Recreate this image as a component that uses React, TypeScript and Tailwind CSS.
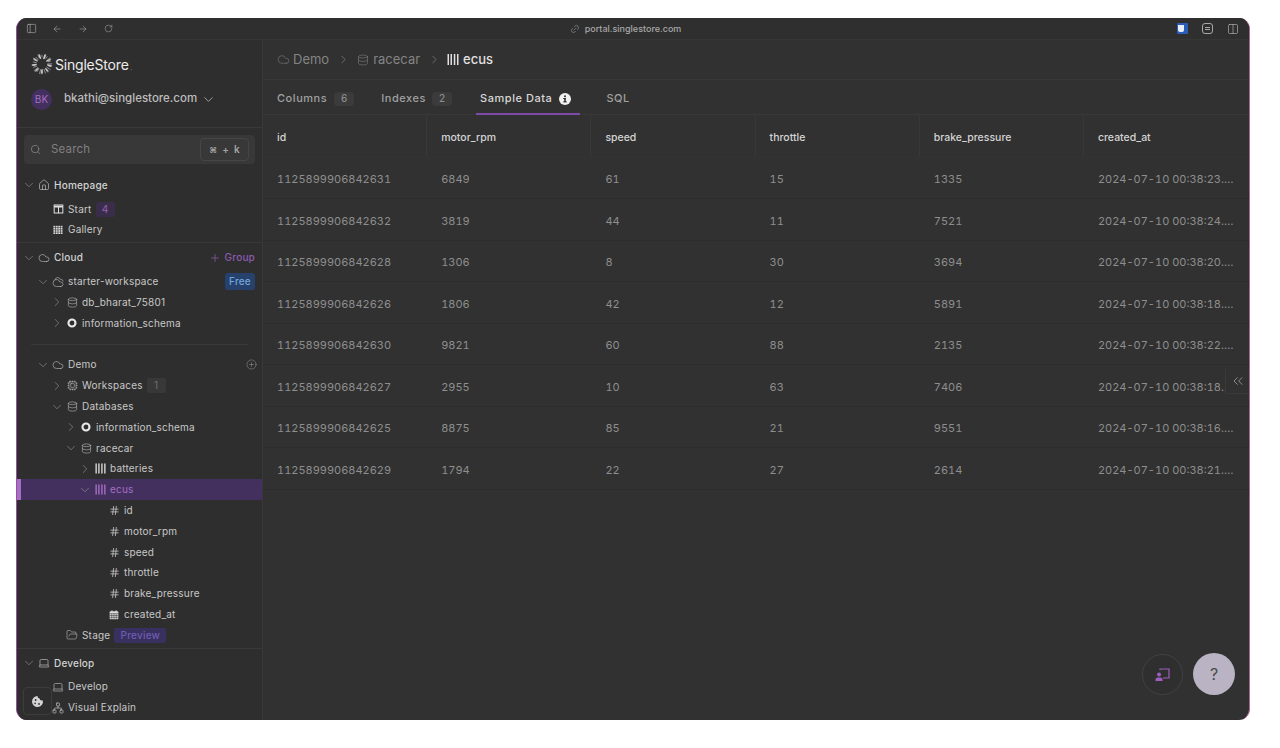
import React from "react";
import { ChevronDown, ChevronRight, ChevronsLeft, ArrowLeft, ArrowRight, RotateCw, Search, Link2, Home, Cloud, Cloudy, Database, Plus, CirclePlus, Cpu, Hash, FolderOpen, Laptop, Network, PanelLeft, Columns2 } from "lucide-react";

const Bars = ({ cls = "" }: { cls?: string }) => (
  <svg viewBox="0 0 12 12" className={cls} fill="currentColor">
    <rect x="0.5" y="0.5" width="1.5" height="11" /><rect x="3.5" y="0.5" width="1.5" height="11" /><rect x="6.8" y="0.5" width="1.5" height="11" /><rect x="10" y="0.5" width="1.5" height="11" />
  </svg>
);
const Schema = () => (
  <svg viewBox="0 0 12 12" className="w-[10px] h-[10px]"><circle cx="6" cy="6" r="4.2" fill="none" stroke="#e8e8e8" strokeWidth="2.6" /></svg>
);
const Grid = () => (
  <svg viewBox="0 0 12 12" className="w-[10px] h-[10px]" fill="#d8d8d8">
    {[0, 1, 2, 3].flatMap((r) => [0, 1, 2, 3].map((c) => <rect key={r + "-" + c} x={0.5 + c * 2.9} y={1 + r * 2.6} width="2.2" height="2" />))}
  </svg>
);
const TableIco = () => (
  <svg viewBox="0 0 12 12" className="w-[11px] h-[10px]" fill="none" stroke="#e0e0e0" strokeWidth="1.2"><rect x="0.8" y="1.2" width="10.4" height="9.6" /><path d="M0.8 3.2h10.4" strokeWidth="2" /><path d="M6 3v8" /></svg>
);
const Cal = () => (
  <svg viewBox="0 0 12 12" className="w-[10px] h-[10px]" fill="#dcdcdc">
    <rect x="0.8" y="1.6" width="10.4" height="9.6" rx="1" /><rect x="3" y="0.4" width="1.2" height="2" /><rect x="7.8" y="0.4" width="1.2" height="2" />
    <path d="M0.8 4.4h10.4M0.8 6.6h10.4M0.8 8.8h10.4M3.3 4.4v7M6 4.4v7M8.7 4.4v7" stroke="#2e2e2e" strokeWidth="0.6" />
  </svg>
);
const CookieIco = () => (
  <svg viewBox="0 0 14 14" className="w-[13px] h-[13px]">
    <path d="M7 1.2a2.4 2.4 0 0 0 2.2 2.6 2.4 2.4 0 0 0 2.4 2.2c.5 0 1 .1 1.2 0A5.9 5.9 0 1 1 7 1.2z" fill="#d4d4d4" />
    <circle cx="5" cy="5.4" r="1" fill="#2e2e2e" /><circle cx="4.4" cy="9" r="0.9" fill="#2e2e2e" /><circle cx="8.6" cy="9.6" r="1" fill="#2e2e2e" />
  </svg>
);
const Logo = () => {
  const rays = Array.from({ length: 56 }, (_, i) => i * (360 / 56));
  return (
    <svg viewBox="0 0 24 24" className="w-[22px] h-[22px]">
      {rays.map((a, i) => (
        <line key={a} x1="12" y1={i % 2 ? 0.8 : 1.8} x2="12" y2={i % 3 ? 6.2 : 5} stroke="#e8e8e8" strokeWidth="0.5" transform={`rotate(${a + 12 * Math.sin(i)} 12 12)`} />
      ))}
    </svg>
  );
};

type RowP = { level: number; chev?: "d" | "r"; icon?: React.ReactNode; label: string; bold?: boolean; children?: React.ReactNode; selected?: boolean };
const Row = ({ level, chev, icon, label, bold, children, selected }: RowP) => {
  const pad: Record<number, string> = { 0: "pl-[7px]", 1: "pl-[21px]", 2: "pl-[35px]", 3: "pl-[49px]", 4: "pl-[63px]", 5: "pl-[77px]" };
  return (
    <div className={`flex items-center h-[20.8px] pr-[7px] text-[10px] tracking-[0.2px] ${pad[level]} ${selected ? "bg-[#43305f] text-[#a56fc4]" : "text-[#c8c8c8]"} ${bold ? "font-medium text-[#d2d2d2]" : ""}`}>
      <span className="w-[10px] flex justify-center shrink-0 text-[#9c9c9c]">
        {chev === "d" && <ChevronDown className="w-[14px] h-[14px] shrink-0" strokeWidth={1} />}
        {chev === "r" && <ChevronRight className="w-[14px] h-[14px] shrink-0" strokeWidth={1} />}
      </span>
      <span className="w-[14px] ml-[3px] flex justify-center items-center shrink-0">{icon}</span>
      <span className="ml-[3px] whitespace-nowrap">{label}</span>
      {children}
    </div>
  );
};
const ic = "w-[12px] h-[12px]";
const Divider = ({ cls = "" }: { cls?: string }) => <div className={`h-px bg-[#393939] ${cls}`} />;
const H = () => <Hash className="w-[11px] h-[11px] text-[#dcdcdc]" strokeWidth={1.5} />;

const cols = ["id", "motor_rpm", "speed", "throttle", "brake_pressure", "created_at"];
const rows = [
  ["1125899906842631", "6849", "61", "15", "1335", "2024-07-10 00:38:23.000000"],
  ["1125899906842632", "3819", "44", "11", "7521", "2024-07-10 00:38:24.000000"],
  ["1125899906842628", "1306", "8", "30", "3694", "2024-07-10 00:38:20.000000"],
  ["1125899906842626", "1806", "42", "12", "5891", "2024-07-10 00:38:18.110000"],
  ["1125899906842630", "9821", "60", "88", "2135", "2024-07-10 00:38:22.000000"],
  ["1125899906842627", "2955", "10", "63", "7406", "2024-07-10 00:38:18.990000"],
  ["1125899906842625", "8875", "85", "21", "9551", "2024-07-10 00:38:16.990000"],
  ["1125899906842629", "1794", "22", "27", "2614", "2024-07-10 00:38:21.000000"],
];

export default function App() {
  return (
    <div className="h-[748px] w-[1280px] bg-white pt-[18px] pl-[16px] overflow-hidden font-['Inter',sans-serif]">
      <div className="relative w-[1234px] h-[702px] rounded-[11px] overflow-hidden bg-[#313131] border-l border-r border-l-[#9a4e9f] border-r-[#a8668f] flex flex-col text-[#c4c4c4]">
        {/* browser bar */}
        <div className="h-[22px] shrink-0 flex items-center bg-[#2f2f2f] border-b border-[#363636] pl-[9px] pr-[10px] text-[#b4b4b4]">
          <PanelLeft className="w-[11px] h-[11px]" strokeWidth={1.3} />
          <ArrowLeft className="w-[10px] h-[10px] ml-[15px]" strokeWidth={1.3} />
          <ArrowRight className="w-[10px] h-[10px] ml-[16px]" strokeWidth={1.3} />
          <RotateCw className="w-[9px] h-[9px] ml-[16px]" strokeWidth={1.3} />
          <div className="flex-1 flex justify-center items-center gap-[5px] pr-[39px] text-[9px] font-medium text-[#a8a8a8]">
            <Link2 className="w-[10px] h-[10px] -rotate-45" strokeWidth={1.2} />
            <span>portal.singlestore.com</span>
          </div>
          <span className="w-[11px] h-[11px] bg-[#2a5db8] rounded-[1px] flex items-start justify-start pl-[1px] pt-[2px]"><span className="w-[6px] h-[7px] bg-[#e8eefb] rounded-b-[2px]" /></span>
          <span className="ml-[14px] w-[11px] h-[11px] rounded-[3px] border border-[#a8a8a8] flex flex-col items-center justify-center gap-[1px]"><span className="w-[5px] h-px bg-[#a8a8a8]" /><span className="w-[5px] h-px bg-[#a8a8a8]" /></span>
          <Columns2 className="w-[12px] h-[12px] ml-[14px] text-[#b8b8b8]" strokeWidth={1.3} />
        </div>
        <div className="flex flex-1 min-h-0">
          {/* sidebar */}
          <aside className="relative w-[246px] shrink-0 border-r border-[#383838] bg-[#2e2e2e] overflow-hidden">
            <div className="h-[48px] flex items-center pl-[14px] gap-[2px]">
              <Logo />
              <span className="text-[14px] text-[#ececec] tracking-[-0.2px]">SingleStore</span>
              <span className="text-[6px] text-[#bbb] self-end mb-[16px]">.</span>
            </div>
            <div className="h-[22px] flex items-center pl-[14px]">
              <span className="w-[21px] h-[21px] rounded-full bg-[#43305f] text-[#a56fc4] text-[10px] flex items-center justify-center">BK</span>
              <span className="ml-[12px] text-[11.5px] font-medium text-[#bdbdbd]">bkathi@singlestore.com</span>
              <ChevronDown className="w-[15px] h-[15px] ml-[4px] text-[#bcbcbc]" strokeWidth={1.2} />
            </div>
            <Divider cls="mt-[17px] bg-[#353535]" />
            <div className="mx-[7px] mt-[7px] h-[29px] rounded-[4px] bg-[#383838] flex items-center pl-[6px] pr-[6px]">
              <Search className="w-[11px] h-[11px] text-[#9a9a9a]" strokeWidth={1.4} />
              <span className="ml-[10px] text-[11.5px] text-[#808080] tracking-[0.2px]">Search</span>
              <span className="ml-auto w-[49px] h-[23px] rounded-[4px] border border-[#464646] flex items-center justify-center gap-[5px] text-[10px] font-semibold text-[#a4a4a4]">
                <span className="text-[8px]">⌘</span><span>+</span><span>k</span>
              </span>
            </div>
            <div className="h-[11px]" />
            <Row level={0} chev="d" bold icon={<Home className={ic} strokeWidth={1.2} />} label="Homepage" />
            <div className="h-[3px]" />
            <Row level={1} icon={<TableIco />} label="Start">
              <span className="ml-[4px] w-[19px] h-[15px] rounded-[2px] bg-[#3a2d4a] text-[#8a5aa8] flex items-center justify-center text-[10px] font-medium">4</span>
            </Row>
            <Row level={1} icon={<Grid />} label="Gallery" />
            <Divider cls="mt-[2px]" />
            <div className="h-[4px]" />
            <Row level={0} chev="d" bold icon={<Cloud className={ic} strokeWidth={1.1} />} label="Cloud">
              <span className="ml-auto flex items-center gap-[4px] text-[#8d5aae] font-medium"><Plus className="w-[12px] h-[12px]" strokeWidth={1.4} />Group</span>
            </Row>
            <div className="h-[3px]" />
            <Row level={1} chev="d" icon={<Cloudy className={ic} strokeWidth={1.1} />} label="starter-workspace">
              <span className="ml-auto w-[30px] h-[17px] rounded-[3px] bg-[#26416b] text-[#72a6dc] flex items-center justify-center text-[10px] font-medium">Free</span>
            </Row>
            <Row level={2} chev="r" icon={<Database className="w-[11px] h-[11px]" strokeWidth={1.2} />} label="db_bharat_75801" />
            <Row level={2} chev="r" icon={<Schema />} label="information_schema" />
            <Divider cls="mx-[14px] mt-[10px]" />
            <div className="h-[10px]" />
            <Row level={1} chev="d" icon={<Cloud className={ic} strokeWidth={1.1} />} label="Demo">
              <CirclePlus className="ml-auto mr-[-2px] w-[11px] h-[11px] text-[#a8a8a8]" strokeWidth={1} />
            </Row>
            <Row level={2} chev="r" icon={<Cpu className="w-[11px] h-[11px]" strokeWidth={1.2} />} label="Workspaces">
              <span className="ml-[4px] w-[19px] h-[15px] rounded-[2px] bg-[#383838] text-[#6f6f6f] flex items-center justify-center text-[10px]">1</span>
            </Row>
            <Row level={2} chev="d" icon={<Database className="w-[11px] h-[11px]" strokeWidth={1.2} />} label="Databases" />
            <Row level={3} chev="r" icon={<Schema />} label="information_schema" />
            <Row level={3} chev="d" icon={<Database className="w-[11px] h-[11px]" strokeWidth={1.2} />} label="racecar" />
            <Row level={4} chev="r" icon={<Bars cls="w-[11px] h-[11px] text-[#d8d8d8]" />} label="batteries" />
            <div className="relative">
              <div className="absolute left-0 top-0 bottom-0 w-[4px] bg-[#a56fc4]" />
              <Row level={4} chev="d" selected icon={<Bars cls="w-[11px] h-[11px] text-[#a56fc4]" />} label="ecus" />
            </div>
            <Row level={5} icon={<H />} label="id" />
            <Row level={5} icon={<H />} label="motor_rpm" />
            <Row level={5} icon={<H />} label="speed" />
            <Row level={5} icon={<H />} label="throttle" />
            <Row level={5} icon={<H />} label="brake_pressure" />
            <Row level={5} icon={<Cal />} label="created_at" />
            <Row level={2} icon={<FolderOpen className={ic} strokeWidth={1.1} />} label="Stage">
              <span className="ml-[4px] w-[52px] h-[15px] rounded-[2px] bg-[#38305f] text-[#6e5cb0] flex items-center justify-center text-[10px] font-medium">Preview</span>
            </Row>
            <Divider cls="mt-[2px]" />
            <div className="h-[4px]" />
            <Row level={0} chev="d" bold icon={<Laptop className={ic} strokeWidth={1.2} />} label="Develop" />
            <div className="h-[3px]" />
            <Row level={1} icon={<Laptop className={ic} strokeWidth={1.2} />} label="Develop" />
            <Row level={1} icon={<Network className={ic} strokeWidth={1.3} />} label="Visual Explain" />
            <div className="absolute left-[6px] top-[647px] w-[29px] h-[28px] rounded-[4px] bg-[#2e2e2e] border border-[#3c3c3c] flex items-center justify-center">
              <CookieIco />
            </div>
          </aside>
          {/* main */}
          <main className="flex-1 min-w-0 flex flex-col relative overflow-hidden">
            <div className="h-[40px] shrink-0 flex items-center pl-[14px] border-b border-[#383838] text-[13px] text-[#848484]">
              <Cloud className="w-[13px] h-[13px]" strokeWidth={1} />
              <span className="ml-[3px]">Demo</span>
              <ChevronRight className="w-[13px] h-[13px] ml-[8px]" strokeWidth={1.3} />
              <Database className="w-[12px] h-[12px] ml-[7px]" strokeWidth={1.1} />
              <span className="ml-[4px]">racecar</span>
              <ChevronRight className="w-[13px] h-[13px] ml-[8px]" strokeWidth={1.3} />
              <Bars cls="w-[12px] h-[13px] ml-[6px] text-[#e0e0e0]" />
              <span className="ml-[4px] font-medium text-[#e0e0e0]">ecus</span>
            </div>
            <div className="h-[35px] shrink-0 flex items-center pl-[14px] pt-[3px] border-b border-[#383838] text-[11px] tracking-[0.55px] text-[#a0a0a0] font-medium relative">
              <span>Columns</span>
              <span className="ml-[7px] w-[20px] h-[14px] rounded-[4px] bg-[#3b3b3b] text-[#8a8a8a] text-[10px] tracking-normal flex items-center justify-center">6</span>
              <span className="ml-[27px]">Indexes</span>
              <span className="ml-[6px] w-[20px] h-[14px] rounded-[4px] bg-[#3b3b3b] text-[#8a8a8a] text-[10px] tracking-normal flex items-center justify-center">2</span>
              <span className="ml-[28px] text-[#d8d8d8]">Sample Data</span>
              <svg viewBox="0 0 12 12" className="w-[12px] h-[12px] ml-[7px]">
                <circle cx="6" cy="6" r="6" fill="#f0f0f0" /><rect x="4.2" y="5" width="2.8" height="1" fill="#303030" /><rect x="5.2" y="5" width="1.6" height="4" fill="#303030" /><rect x="4.2" y="8.4" width="3.6" height="1" fill="#303030" /><circle cx="6" cy="3.3" r="1" fill="#303030" />
              </svg>
              <span className="ml-[35px]">SQL</span>
              <div className="absolute left-[213px] w-[104px] -bottom-px h-[2px] bg-[#7d4aa8]" />
            </div>
            <div className="h-[43px] shrink-0 flex border-b border-[#333]">
              {cols.map((c) => (
                <div key={c} className="w-[164.2px] shrink-0 pl-[14px] pt-[3px] flex items-center text-[10.5px] font-medium text-[#d4d4d4] border-r border-[#383838] last:border-r-0">{c}</div>
              ))}
            </div>
            {rows.map((r) => (
              <div key={r[0]} className="h-[41.45px] shrink-0 flex border-b border-[#2c2c2c] text-[11px] tabular-nums text-[#8e8e8e]">
                {r.map((v, i) => (
                  <div key={i} className="w-[164.2px] shrink-0 pl-[14px] pr-[14px] pt-[3px] flex items-center min-w-0">
                    <span className="truncate">{v}</span>
                  </div>
                ))}
              </div>
            ))}
            {/* collapse */}
            <div className="absolute right-0 top-[329px] w-[24px] h-[25px] bg-[#313131] border-l border-b border-[#3a3a3a] rounded-bl-[3px] flex items-center justify-center">
              <ChevronsLeft className="w-[16px] h-[16px] text-[#b8b8b8]" strokeWidth={1} />
            </div>
            {/* floats */}
            <div className="absolute right-[66px] bottom-[25px] w-[41px] h-[41px] rounded-full border border-[#424242] bg-[#2f2f2f] flex items-center justify-center">
              <svg viewBox="0 0 16 16" className="w-[16px] h-[16px]" fill="none" stroke="#a05fc0" strokeWidth="1.2">
                <path d="M5 3V2h9v9H8" /><circle cx="4" cy="7.5" r="2" fill="#a05fc0" stroke="none" /><path d="M0.5 14v-1.5C0.5 11 2 10.5 4 10.5s3.5.5 3.5 2V14z" fill="#a05fc0" stroke="none" />
              </svg>
            </div>
            <div className="absolute right-[14px] bottom-[25px] w-[42px] h-[42px] rounded-full bg-[#b9b3c3] flex items-center justify-center text-[16px] text-[#4a4a4a]">?</div>
          </main>
        </div>
      </div>
    </div>
  );
}
